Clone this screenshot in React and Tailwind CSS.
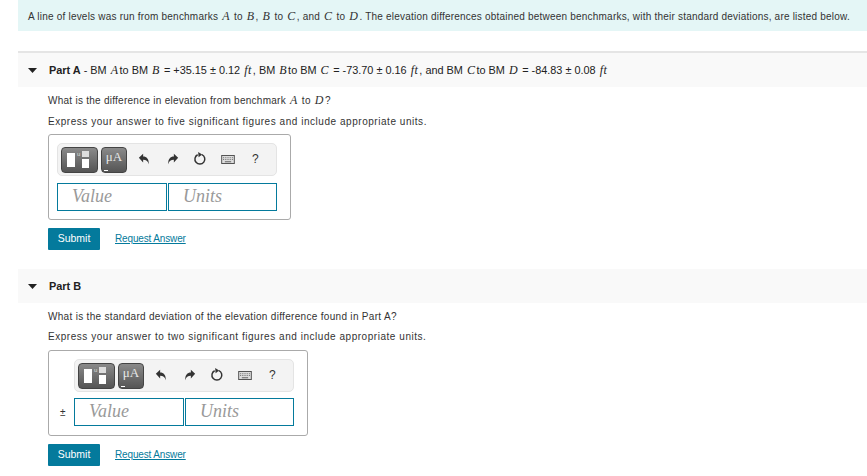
import React from "react";

const M = ({ children }) => (
  <i className="font-['Liberation_Serif',serif] text-[12px] tracking-[0.5px] px-[1px]">{children}</i>
);

function Toolbar() {
  return (
    <div className="h-[33px] w-[220px] rounded-[5px] border border-[#e4e4e4] bg-[#f3f3f3] flex items-center pl-[3px] text-[#333]">
      <div className="w-[37px] h-[26px] rounded-[4px] border border-[#444] bg-gradient-to-b from-[#8a8a8a] to-[#555] flex items-start gap-[2px] pl-[5px] pt-[4px] shrink-0">
        <div className="w-[8px] h-[14px] bg-white mt-[1px]" />
        <span className="text-[6px] leading-[6px] text-[#ddd] -mt-[1px]">u</span>
        <div className="flex flex-col gap-[2px] -mt-[1px]">
          <div className="w-[7px] h-[6px] bg-[#ddd]" />
          <div className="w-[7px] h-[9px] bg-white" />
        </div>
      </div>
      <div className="ml-[3px] w-[26px] h-[26px] rounded-[4px] border border-[#444] bg-gradient-to-b from-[#8a8a8a] to-[#555] text-[#e8e8e8] text-[13px] leading-[17px] text-center font-['Liberation_Serif',serif] shrink-0 relative">
        μA
        <div className="absolute left-[2px] bottom-[1px] w-[4px] h-[1px] bg-white" />
      </div>
      <svg className="ml-[11px] shrink-0 -mt-[1px]" width="12" height="12" viewBox="0 0 14 14"><path d="M1 5.500 6 1v3c4 0 7 3 6.500 9C11.500 9.500 9.500 8 6 8v3z" fill="#333" /></svg>
      <svg className="ml-[17px] shrink-0 -mt-[1px]" width="12" height="12" viewBox="0 0 14 14"><path d="M13 5.500 8 1v3c-4 0-7 3-6.500 9C2.500 9.500 4.500 8 8 8v3z" fill="#333" /></svg>
      <svg className="ml-[14px] shrink-0 -mt-[1px]" width="14" height="14" viewBox="0 0 15 15"><path d="M9.500 2.800A5.300 5.300 0 1 1 5 2.900" fill="none" stroke="#333" strokeWidth="1.600" /><path d="M5.500 0 9.800 2.700 6 5.500z" fill="#333" /></svg>
      <svg className="ml-[14px] shrink-0" width="14" height="9" viewBox="0 0 15 10"><rect x=".5" y=".5" width="14" height="9" fill="#ddd" stroke="#444" /><path d="M2 3h11M2 5h11" stroke="#666" strokeDasharray="1 1" /><path d="M4 7.500h7" stroke="#555" /></svg>
      <span className="ml-[17px] -mt-[2px] text-[12px] font-['Liberation_Sans',sans-serif]">?</span>
    </div>
  );
}

function Field({ label, w }) {
  return (
    <div className={`${w} h-[28px] border border-[#047a9c] bg-white pl-[14px] pb-[2px] flex items-center font-['Liberation_Serif',serif] italic text-[18px] text-[#999]`}>
      {label}
    </div>
  );
}

function Actions() {
  return (
    <div className="flex items-center">
      <div className="w-[52px] h-[22px] rounded-[1px] bg-[#047a9c] text-white text-[10.500px] flex items-center justify-center">Submit</div>
      <span className="ml-[15px] -mt-[2px] text-[10px] tracking-[-0.15px] text-[#047a9c] underline">Request Answer</span>
    </div>
  );
}

function Caret() {
  return (
    <svg className="ml-[10px] mr-[12px] shrink-0" width="9" height="5" viewBox="0 0 9 5"><path d="M0 0h9L4.500 5z" fill="#222" /></svg>
  );
}

export default function App() {
  return (
    <div className="w-[867px] h-[476px] overflow-hidden bg-white font-['Liberation_Sans',sans-serif] text-[#333]">
      <div className="ml-[18px]">
        <div className="h-[31px] bg-[#e4f6f6] pl-[10px] flex items-center text-[10px] tracking-[0.21px] whitespace-nowrap">
          <span>A line of levels was run from benchmarks <M>A</M> to <M>B</M>, <M>B</M> to <M>C</M>, and <M>C</M> to <M>D</M>. The elevation differences obtained between benchmarks, with their standard deviations, are listed below.</span>
        </div>

        <div className="mt-[20px] h-[36px] border-t-2 border-[#e5e5e5] bg-[#f9f9f9] flex items-center text-[10.900px] whitespace-nowrap text-[#222]">
          <Caret />
          <span><b>Part A</b> - BM <M>A</M>to BM <M>B</M> = +35.15 ± 0.12 <M>ft</M>, BM <M>B</M>to BM <M>C</M> = -73.70 ± 0.16 <M>ft</M>, and BM <M>C</M>to BM <M>D</M> = -84.83 ± 0.08 <M>ft</M></span>
        </div>

        <div className="pl-[30px]">
          <p className="mt-[6px] h-[14px] leading-[14px] text-[10px] tracking-[0.26px]">What is the difference in elevation from benchmark <M>A</M> to <M>D</M>?</p>
          <p className="mt-[8px] h-[14px] leading-[14px] text-[10px] tracking-[0.54px]">Express your answer to five significant figures and include appropriate units.</p>
          <div className="mt-[5px] w-[243px] h-[86px] rounded-[3px] border border-[#aaa] pl-[8px] pt-[8px]">
            <Toolbar />
            <div className="mt-[7px] flex gap-px">
              <Field label="Value" w="w-[110px]" />
              <Field label="Units" w="w-[109px]" />
            </div>
          </div>
          <div className="mt-[8px]"><Actions /></div>
        </div>

        <div className="mt-[19px] h-[34px] bg-[#f9f9f9] flex items-center text-[10.900px] text-[#222]">
          <Caret />
          <b>Part B</b>
        </div>

        <div className="pl-[30px]">
          <p className="mt-[7px] h-[14px] leading-[14px] text-[10px] tracking-[0.31px]">What is the standard deviation of the elevation difference found in Part A?</p>
          <p className="mt-[6px] h-[14px] leading-[14px] text-[10px] tracking-[0.54px]">Express your answer to two significant figures and include appropriate units.</p>
          <div className="mt-[6px] w-[260px] h-[86px] rounded-[3px] border border-[#aaa] pt-[8px] flex flex-col items-end pr-[13px]">
            <Toolbar />
            <div className="mt-[6px] flex items-center gap-px relative">
              <span className="absolute -left-[14px] text-[10px]">±</span>
              <Field label="Value" w="w-[110px]" />
              <Field label="Units" w="w-[109px]" />
            </div>
          </div>
          <div className="mt-[8px]"><Actions /></div>
        </div>
      </div>
    </div>
  );
}
